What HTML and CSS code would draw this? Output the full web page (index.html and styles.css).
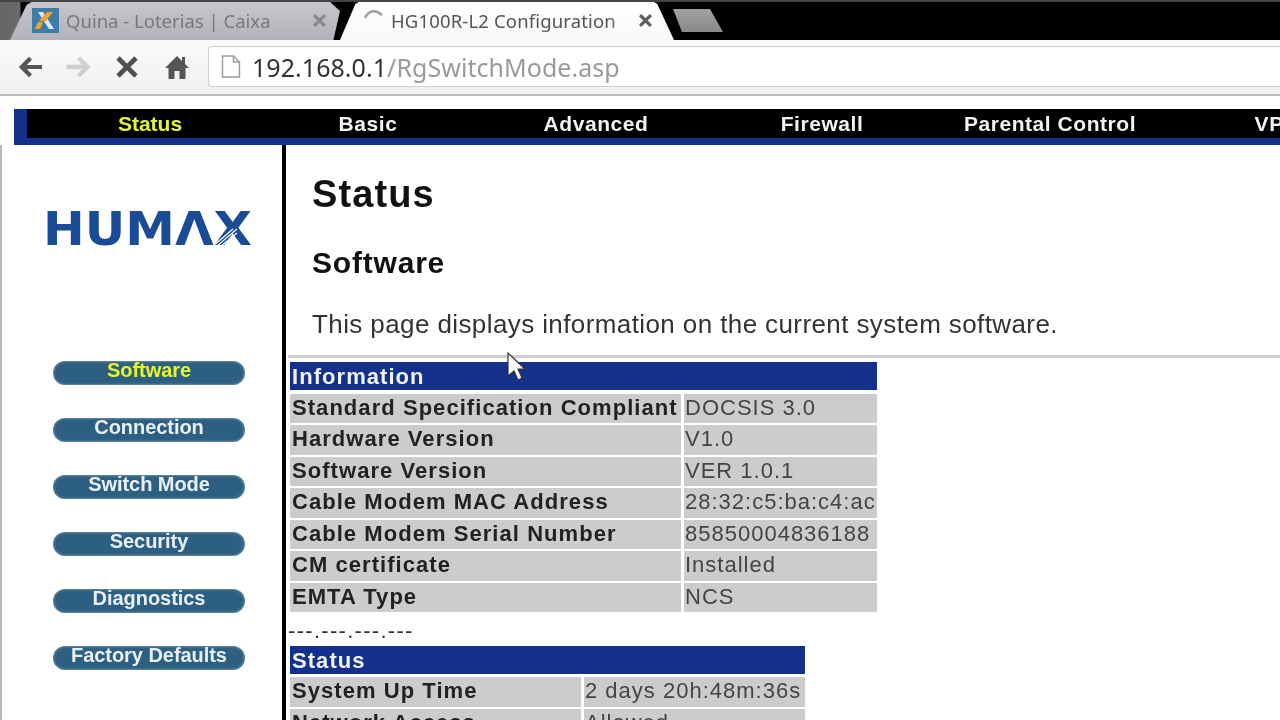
FILE: index.html
```html
<!DOCTYPE html>
<html lang="en">
<head>
<meta charset="utf-8">
<title>HG100R-L2 Configuration</title>
<link rel="stylesheet" href="styles.css">
</head>
<body>
<div class="tabstrip">
  <div class="tab tab-inactive">
    <svg class="favicon" viewBox="0 0 27 25"><rect width="27" height="25" fill="#3f7da8"/><path d="M6 4h5l11 17h-5z" fill="#dfe6ee"/><path d="M21 4h-6L7 13h7z" fill="#f2a32c"/><path d="M11 14H6l-3 7h5z" fill="#f2a32c"/></svg>
    <span class="tab-title">Quina - Loterias | Caixa</span>
    <svg class="tab-close" viewBox="0 0 14 14"><path d="M2 2l10 10M12 2L2 12" stroke="#8a8a8c" stroke-width="3"/></svg>
  </div>
  <div class="tab tab-active">
    <svg class="spinner" viewBox="0 0 20 12"><path d="M2 10C6 2 13 1 19 7" fill="none" stroke="#a0a0a0" stroke-width="2.5"/></svg>
    <span class="tab-title tab-title-active">HG100R-L2 Configuration</span>
    <svg class="tab-close" viewBox="0 0 14 14"><path d="M2 2l10 10M12 2L2 12" stroke="#5e5e5e" stroke-width="3"/></svg>
  </div>
  <div class="newtab"></div>
</div>

<div class="toolbar">
  <svg class="tool tool-back" viewBox="0 0 26 22"><path d="M25 11H6M13 2l-9 9 9 9" fill="none" stroke="#555" stroke-width="4.4"/></svg>
  <svg class="tool tool-fwd" viewBox="0 0 26 22"><path d="M1 11h19M13 2l9 9-9 9" fill="none" stroke="#cfcfcf" stroke-width="4.4"/></svg>
  <svg class="tool tool-stop" viewBox="0 0 24 22"><path d="M3 2l18 18M21 2L3 20" stroke="#4f4f4f" stroke-width="4.6"/></svg>
  <svg class="tool tool-home" viewBox="0 0 24 24"><path d="M12 1L0 13h3.5v11h6v-8h5v8h6V13H24l-4-4V2h-3v4z" fill="#555"/></svg>
  <div class="omnibox">
    <svg class="page-icon" viewBox="0 0 20 23"><path d="M1.5 1h11l6 6v15h-17z" fill="#fdfdfd" stroke="#9a9a9a" stroke-width="1.4"/><path d="M12.5 1v6h6" fill="none" stroke="#9a9a9a" stroke-width="1.4"/></svg>
    <span class="url"><span class="url-host">192.168.0.1</span>/RgSwitchMode.asp</span>
  </div>
</div>

<div class="page">
  <nav class="topnav">
    <a class="topnav-item is-current">Status</a>
    <a class="topnav-item">Basic</a>
    <a class="topnav-item">Advanced</a>
    <a class="topnav-item">Firewall</a>
    <a class="topnav-item">Parental Control</a>
    <a class="topnav-item">VPN</a>
  </nav>
  <div class="main">
    <aside class="sidebar">
      <svg class="logo" viewBox="0 0 210 40" role="img" aria-label="HUMAX">
        <text class="logo-text" x="0" y="36" textLength="209" lengthAdjust="spacingAndGlyphs">HUMΛX</text>
        <path d="M170 37l20-17M174 37l20-17M178 37l16-13" stroke="#fff" stroke-width="1.1" fill="none"/>
      </svg>
      <ul class="sidemenu">
        <li class="sidebtn is-current">Software</li>
        <li class="sidebtn">Connection</li>
        <li class="sidebtn">Switch Mode</li>
        <li class="sidebtn">Security</li>
        <li class="sidebtn">Diagnostics</li>
        <li class="sidebtn">Factory Defaults</li>
      </ul>
    </aside>
    <main class="content">
      <h1 class="title">Status</h1>
      <h2 class="subtitle">Software</h2>
      <p class="intro">This page displays information on the current system software.</p>
      <hr class="rule">
      <div class="grid-table table-info">
        <div class="th">Information</div>
        <div class="td-label">Standard Specification Compliant</div><div class="td-value">DOCSIS 3.0</div>
        <div class="td-label">Hardware Version</div><div class="td-value">V1.0</div>
        <div class="td-label">Software Version</div><div class="td-value">VER 1.0.1</div>
        <div class="td-label">Cable Modem MAC Address</div><div class="td-value">28:32:c5:ba:c4:ac</div>
        <div class="td-label">Cable Modem Serial Number</div><div class="td-value">85850004836188</div>
        <div class="td-label">CM certificate</div><div class="td-value">Installed</div>
        <div class="td-label">EMTA Type</div><div class="td-value">NCS</div>
      </div>
      <div class="dashes">---.---.---.---</div>
      <div class="grid-table table-status">
        <div class="th">Status</div>
        <div class="td-label">System Up Time</div><div class="td-value">2 days 20h:48m:36s</div>
        <div class="td-label">Network Access</div><div class="td-value">Allowed</div>
      </div>
    </main>
  </div>
</div>

<svg class="cursor" viewBox="0 0 20 30"><path d="M1 1v23l6-5 4 9 4-2-4-9h7z" fill="#fff" stroke="#333" stroke-width="1.2"/></svg>
</body>
</html>
```
FILE: styles.css
```css
* { box-sizing: border-box; }
html, body { margin: 0; padding: 0; }
body {
  width: 1280px;
  height: 720px;
  overflow: hidden;
  position: relative;
  background: #fff;
  font-family: "Liberation Sans", Arial, sans-serif;
  color: #222;
  filter: blur(0.4px);
}

/* browser chrome */
.tabstrip {
  height: 40px;
  display: flex;
  align-items: flex-end;
  overflow: hidden;
  background: linear-gradient(90deg, #666 0, #6a6a6a 20px, #000 21px);
  border-top: 2px solid #444;
}
.tab {
  height: 38px;
  display: flex;
  align-items: center;
  padding-bottom: 2px;
  font-family: "Noto Sans", "Open Sans", sans-serif;
  font-size: 18.5px;
}
.tab-inactive {
  width: 330px;
  margin-left: 10px;
  padding-left: 22px;
  padding-right: 13px;
  background: linear-gradient(180deg, #c6c6cc, #b2b2b8);
  clip-path: polygon(0 100%, 5% 8%, 6.5% 0, 97% 0, 100% 24%, 98% 100%);
  color: #77797f;
}
.tab-active {
  width: 334px;
  padding-left: 23px;
  padding-right: 21px;
  background: linear-gradient(180deg, #fff, #f8f8f8);
  clip-path: polygon(0 100%, 4.6% 5%, 5.6% 0, 94% 0, 95% 5%, 100% 100%);
  color: #555;
}
.favicon { width: 27px; height: 25px; flex: none; }
.spinner { width: 20px; height: 12px; flex: none; margin: -12px 8px 0 0; }
.tab-title { flex: 1; margin-left: 7px; white-space: nowrap; overflow: hidden; }
.tab-title-active {
  margin-left: 0;
  letter-spacing: 0.15px;
  -webkit-mask-image: linear-gradient(90deg, #000 88%, rgba(0, 0, 0, 0.25) 98%);
  mask-image: linear-gradient(90deg, #000 88%, rgba(0, 0, 0, 0.25) 98%);
}
.tab-close { width: 15px; height: 15px; flex: none; }
.newtab {
  width: 50px;
  height: 23px;
  margin: 0 0 8px -1px;
  background: linear-gradient(180deg, #a2a2a2, #888);
  clip-path: polygon(0 0, 74% 0, 100% 100%, 18% 100%);
}
.toolbar {
  height: 56px;
  display: flex;
  align-items: center;
  padding: 0 0 1px 18px;
  background: linear-gradient(180deg, #fafafa, #f0f0f0);
  border-bottom: 2px solid #bdbdbd;
}
.tool { flex: none; }
.tool-back { width: 25px; height: 22px; }
.tool-fwd { width: 27px; height: 22px; margin-left: 22px; }
.tool-stop { width: 24px; height: 22px; margin-left: 23px; }
.tool-home { width: 24px; height: 24px; margin-left: 26px; }
.omnibox {
  flex: 1;
  height: 41px;
  margin-left: 19px;
  display: flex;
  align-items: center;
  padding-left: 12px;
  background: #fff;
  border: 1px solid #cfcfcf;
  border-right: 0;
  border-radius: 4px 0 0 4px;
}
.page-icon { width: 20px; height: 23px; flex: none; }
.url {
  margin-left: 11px;
  font-family: "Noto Sans", "Open Sans", sans-serif;
  font-size: 25px;
  letter-spacing: 0.05px;
  color: #9a9a9a;
  white-space: nowrap;
}
.url-host { color: #333; }

/* router page */
.page { padding-top: 13px; }
.topnav {
  width: 1400px;
  height: 36px;
  margin-left: 14px;
  padding-left: 19px;
  display: grid;
  grid-template-columns: 208px 228px 228px 224px 232px 222px;
  background: #000;
  border-left: 13px solid #13308a;
  border-bottom: 7px solid #13308a;
}
.topnav-item {
  text-align: center;
  line-height: 30px;
  font-size: 21px;
  font-weight: bold;
  letter-spacing: 0.55px;
  color: #f3f3f3;
  white-space: nowrap;
}
.topnav-item.is-current { color: #e8f52a; letter-spacing: 0; }

.main {
  display: flex;
  height: 575px;
}
.sidebar {
  width: 282px;
  flex: none;
  border-left: 2px solid #b8b8b8;
  padding-top: 64px;
}
.logo {
  display: block;
  width: 210px;
  height: 40px;
  margin-left: 41px;
}
.logo-text {
  font-family: "DejaVu Sans", sans-serif;
  font-size: 46px;
  font-weight: bold;
  fill: #1a4b96;
}
.sidemenu {
  list-style: none;
  margin: 112px 0 0 51px;
  padding: 0;
  display: flex;
  flex-direction: column;
  gap: 33px;
}
.sidebtn {
  width: 192px;
  height: 24px;
  border-radius: 12px;
  background: #2d5f82;
  box-shadow: inset 0 0 3px #a9bac6;
  text-align: center;
  font-size: 20px;
  font-weight: bold;
  line-height: 19px;
  letter-spacing: -0.05px;
  color: #e8f0f6;
}
.sidebtn.is-current { color: #e8f52a; }

.content {
  flex: 1;
  min-width: 0;
  border-left: 4px solid #000;
  overflow: hidden;
}
.title {
  margin: 29px 0 0 26px;
  font-size: 38px;
  line-height: 40px;
  letter-spacing: 1.1px;
  color: #111;
}
.subtitle {
  margin: 33px 0 0 26px;
  font-size: 30px;
  line-height: 32px;
  letter-spacing: 0.8px;
  color: #111;
}
.intro {
  margin: 30px 0 0 26px;
  font-size: 26px;
  line-height: 30px;
  letter-spacing: 0.4px;
  color: #333;
}
.rule {
  height: 3px;
  margin: 16px 0 0 2px;
  border: 0;
  background: #cfcfcf;
}
.grid-table {
  display: grid;
  column-gap: 3px;
  row-gap: 2px;
  margin-left: 4px;
  grid-auto-rows: 29.5px;
  font-size: 22px;
  letter-spacing: 1.05px;
}
.table-info { grid-template-columns: 391px 193px; margin-top: 4px; width: 587px; }
.table-status { grid-template-columns: 291px 221px; margin-top: 5px; width: 515px; }
.th {
  grid-column: 1 / -1;
  height: 28px;
  padding-left: 2px;
  line-height: 29px;
  font-weight: bold;
  color: #f2f4fb;
  background: #13308a;
}
.td-label, .td-value {
  background: #cccccc;
  line-height: 28px;
  white-space: nowrap;
  overflow: hidden;
}
.td-label { padding-left: 2px; font-weight: bold; color: #222; }
.td-value { padding-left: 1px; color: #444; letter-spacing: 1px; }
.dashes {
  margin: 8.5px 0 0 2px;
  font-size: 22px;
  line-height: 20px;
  letter-spacing: 1.3px;
  color: #333;
}

.cursor {
  position: absolute;
  left: 507px;
  top: 352px;
  width: 20px;
  height: 30px;
}
```
